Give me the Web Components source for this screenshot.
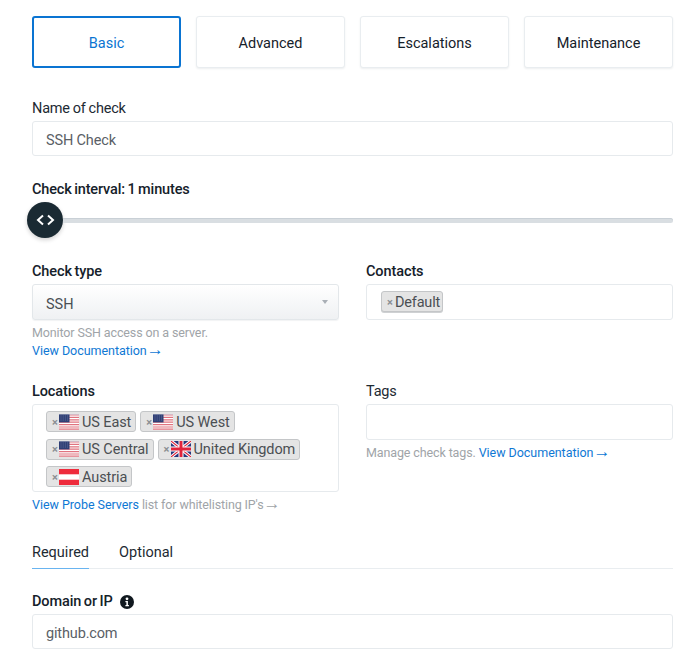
<!DOCTYPE html>
<html lang="en">
<head>
<meta charset="UTF-8">
<title>SSH Check</title>
<style>
    html, body { margin: 0; background: #fff; }
    body { font: 400 14.5px/18px Roboto, "Liberation Sans", sans-serif; color: #1d2a33; height: 662px; overflow: hidden; }
</style>
</head>
<body>
<check-form>
    <tab-cards slot="cards">
        <tab-card active>Basic</tab-card>
        <tab-card>Advanced</tab-card>
        <tab-card>Escalations</tab-card>
        <tab-card>Maintenance</tab-card>
    </tab-cards>
    <form-field label="Name of check" style="margin-top:31px"><text-box>SSH Check</text-box></form-field>
    <interval-slider label="Check interval: 1 minutes" style="margin-top:24px"></interval-slider>
    <field-grid style="margin-top:24px">
        <form-field label="Check type" strong>
            <select-box>SSH</select-box>
            <help-text style="margin-top:4px">Monitor SSH access on a server.</help-text>
            <help-text><a-link arrow>View Documentation</a-link></help-text>
        </form-field>
        <form-field label="Contacts" strong>
            <tag-box><tag-chip>Default</tag-chip></tag-box>
        </form-field>
        <form-field label="Locations" strong>
            <tag-box>
                <tag-chip flag="us">US East</tag-chip>
                <tag-chip flag="us">US West</tag-chip>
                <tag-chip flag="us">US Central</tag-chip>
                <tag-chip flag="uk">United Kingdom</tag-chip>
                <tag-chip flag="at">Austria</tag-chip>
            </tag-box>
            <help-text style="margin-top:4px"><a-link>View Probe Servers</a-link> list for whitelisting IP's <arrow-mark></arrow-mark></help-text>
        </form-field>
        <form-field label="Tags">
            <tag-box></tag-box>
            <help-text style="margin-top:4px">Manage check tags. <a-link arrow>View Documentation</a-link></help-text>
        </form-field>
    </field-grid>
    <sub-tabs style="margin-top:30px">
        <sub-tab active>Required</sub-tab>
        <sub-tab>Optional</sub-tab>
    </sub-tabs>
    <form-field label="Domain or IP" strong info style="margin-top:24px"><text-box style="margin-top:-1px">github.com</text-box></form-field>
</check-form>

<script>
    function define(name, css, html) {
        customElements.define(name, class extends HTMLElement {
            constructor() {
                super();
                this.attachShadow({mode: 'open'});
            }
            connectedCallback() {
                const markup = typeof html === 'function' ? html(this) : html;
                this.shadowRoot.innerHTML = `<style>${css}</style>${markup}`;
            }
        });
    }

    const flags = {
        us: `<svg width="20" height="16" viewBox="0 0 20 16">
            <rect width="20" height="16" fill="#fff"/>
            <path d="M0 1h20M0 3.4h20M0 5.8h20M0 8.2h20M0 10.6h20M0 13h20M0 15.2h20" stroke="#e0737f" stroke-width="1.2"/>
            <rect width="10.5" height="8.4" fill="#2f3f75"/>
            <rect y="0" width="20" height=".5" fill="#b9bfd0"/>
            <path d="M1.5 2h8M1.5 4h8M1.5 6h8" stroke="#8791b5" stroke-width=".6" stroke-dasharray="1 1.2"/>
        </svg>`,
        uk: `<svg width="20" height="16" viewBox="0 0 20 16">
            <rect width="20" height="16" fill="#27367c"/>
            <path d="M0 0L20 16M20 0L0 16" stroke="#fff" stroke-width="3.2"/>
            <path d="M0 0L20 16M20 0L0 16" stroke="#e0243c" stroke-width="1.1"/>
            <path d="M10 0V16M0 8H20" stroke="#fff" stroke-width="5"/>
            <path d="M10 0V16M0 8H20" stroke="#e0243c" stroke-width="3"/>
        </svg>`,
        at: `<svg width="20" height="16" viewBox="0 0 20 16">
            <rect width="20" height="16" fill="#fff"/>
            <rect width="20" height="5.3" fill="#ee2b3c"/>
            <rect y="10.7" width="20" height="5.3" fill="#ee2b3c"/>
        </svg>`
    };

    define('check-form', `
        :host { display: block; padding: 16px 27px 0 32px; }
    `, `<slot name="cards"></slot><slot></slot>`);

    define('tab-cards', `
        :host { display: grid; grid-template-columns: repeat(4, 1fr); gap: 15px; }
    `, `<slot></slot>`);

    define('tab-card', `
        :host { display: flex; align-items: center; justify-content: center; box-sizing: border-box; height: 52px; padding-top: 4px; background: #fff;
            border: 1px solid #e9edf0; border-radius: 3px; box-shadow: 0 1px 2px rgba(30,50,70,.08); color: #15212a; }
        :host([active]) { border: 2px solid #0a74d2; color: #0a74d2; box-shadow: none; }
    `, `<slot></slot>`);

    define('form-field', `
        :host { display: block; min-width: 0; }
        .label { display: flex; align-items: center; gap: 7px; height: 17px; padding-top: 1px; margin-bottom: 4px; letter-spacing: -.2px; word-spacing: -.5px; }
        :host([strong]) .label { font-weight: 500; color: #15212a; letter-spacing: -.1px; word-spacing: -1px; }
        svg { display: block; margin-top: -1px; }
    `, el => `<div class="label"><span>${el.getAttribute('label')}</span>${el.hasAttribute('info') ? `
        <svg width="14" height="14" viewBox="0 0 14 14">
            <circle cx="7" cy="7" r="7" fill="#10181f"/>
            <circle cx="7" cy="3.8" r="1.4" fill="#fff"/>
            <path d="M5.4 6h2.5v4h1v1.2H5.4V10h1V7.2h-1z" fill="#fff"/>
        </svg>` : ''}</div><slot></slot>`);

    define('text-box', `
        :host { display: flex; align-items: center; box-sizing: border-box; height: 35px; padding: 5px 13px 0; background: #fff;
            border: 1px solid #e6eaed; border-radius: 3px; color: #5a6066; letter-spacing: -.15px; }
    `, `<slot></slot>`);

    define('select-box', `
        :host { display: flex; align-items: center; justify-content: space-between; box-sizing: border-box; height: 36px; padding: 5px 13px 0; color: #4a4f54;
            border: 1px solid #e3e7ea; border-radius: 3px; background: linear-gradient(#fff, #eff1f3); box-shadow: 0 1px 1px rgba(30,50,70,.06); }
        i { width: 0; height: 0; border: 3.5px solid transparent; border-top: 4.5px solid #a9afb6; border-bottom: 0; margin-right: -3px; margin-top: -5px; }
    `, `<slot></slot><i></i>`);

    define('tag-box', `
        :host { display: flex; flex-wrap: wrap; gap: 6.5px 4px; align-content: flex-start; box-sizing: border-box; min-height: 36px; padding: 6px 13px 3.5px;
            background: #fff; border: 1px solid #e6eaed; border-radius: 3px; }
    `, `<slot></slot>`);

    define('tag-chip', `
        :host { display: inline-flex; align-items: center; box-sizing: border-box; height: 21px; padding: 1px 4px 0 5px; background: #e4e4e4;
            border: 1px solid #c4c6c8; border-radius: 3px; color: #4b4f53; line-height: 19px; white-space: nowrap; letter-spacing: -.1px; }
        :host(:not([flag])) { margin-left: 1px; padding-right: 2px; letter-spacing: -.2px; box-shadow: 0 1px 0 #cfd1d3; }
        :host(:not([flag])) b { margin-right: 1px; }
        b { font-weight: 700; font-size: 11px; color: #8b8f93; width: 7px; }
        svg { display: block; margin-top: -1px; margin-right: 3px; }
    `, el => `<b>×</b>${flags[el.getAttribute('flag')] || ''}<slot></slot>`);

    define('help-text', `
        :host { display: block; font-size: 12.5px; line-height: 18px; color: #a0a4a8; white-space: nowrap; letter-spacing: -.12px; }
    `, `<slot></slot>`);

    define('arrow-mark', `
        :host { display: inline-block; height: 18px; margin-left: -3px; font-size: 17px; line-height: 15px; letter-spacing: 0; vertical-align: top; }
    `, `→`);

    define('a-link', `
        :host { color: #0f78d4; letter-spacing: -.04px; }
    `, el => `<slot></slot>${el.hasAttribute('arrow') ? ' <arrow-mark></arrow-mark>' : ''}`);

    define('field-grid', `
        :host { display: grid; grid-template-columns: 1fr 1fr; column-gap: 27px; row-gap: 22px; }
    `, `<slot></slot>`);

    define('interval-slider', `
        :host { display: block; }
        .label { font-weight: 500; color: #15212a; height: 17px; padding-top: 1px; letter-spacing: -.15px; word-spacing: -.9px; }
        .rail { display: flex; align-items: center; margin-top: 4px; margin-left: -5px; }
        .knob { flex: none; display: flex; align-items: center; justify-content: center; width: 36px; height: 36px; border-radius: 50%;
            background: #1a2a33; box-shadow: 0 2px 4px rgba(0,0,0,.18); }
        .track { flex: 1; height: 5px; border-radius: 0 3px 3px 0; background: #d9dee2; box-shadow: inset 0 1px 0 #c9d0d6; }
    `, el => `<div class="label">${el.getAttribute('label')}</div><div class="rail"><div class="knob">
        <svg width="19" height="12" viewBox="0 0 19 12" fill="none" stroke="#fff" stroke-width="2"><path d="M7 1.500L2 6L7 10.500M12 1.500L17 6L12 10.500"/></svg>
        </div><div class="track"></div></div>`);

    define('sub-tabs', `
        :host { display: flex; gap: 30px; border-bottom: 1px solid #e9edf0; }
    `, `<slot></slot>`);

    define('sub-tab', `
        :host { display: block; height: 24px; line-height: 18px; margin-bottom: -1px; }
        :host([active]) { border-bottom: 1px solid #69b4f0; }
    `, `<slot></slot>`);
</script>
</body>
</html>
